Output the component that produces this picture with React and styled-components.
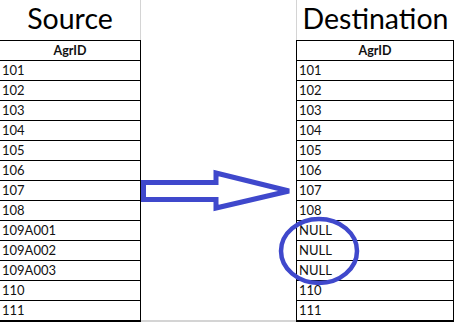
import React from 'react'
import styled, { createGlobalStyle } from 'styled-components'

const GlobalStyle = createGlobalStyle`
  html, body {
    margin: 0;
    padding: 0;
    background: #fff;
  }
  body {
    font-family: Lato, "Liberation Sans", sans-serif;
    color: #000;
  }
`

const Page = styled.div`
  position: relative;
  width: 454px;
  height: 322px;
  overflow: hidden;
  display: flex;
  align-items: flex-start;
  background: #fff;
`

const Panel = styled.div`
  width: ${p => p.$width}px;
  flex-shrink: 0;
  display: flex;
  flex-direction: column;
`

const Title = styled.div`
  height: 40px;
  line-height: 36px;
  font-size: 28.5px;
  text-align: center;
  white-space: nowrap;
  overflow: visible;
  box-sizing: border-box;
  border-${p => p.$side}: 1px solid #d4d4d4;
`

const Table = styled.div`
  display: flex;
  flex-direction: column;
  border-top: 1px solid #000;
  border-bottom: 2px solid #000;
  border-right: 1px solid #000;
  border-left: ${p => (p.$left ? '1px solid #000' : 'none')};
`

const Row = styled.div`
  height: 19px;
  line-height: 19px;
  font-size: 13px;
  padding-left: 2px;
  white-space: nowrap;
  color: #111;
  border-top: ${p => (p.$first ? 'none' : '1px solid #000')};
  ${p => p.$head && `
    font-weight: 700;
    font-size: 12.5px;
    text-align: center;
    padding-left: 0;
  `}
`

const Gap = styled.div`
  flex: 1;
  height: 322px;
  box-sizing: border-box;
  border-bottom: 2px solid #d4d4d4;
`

const Overlay = styled.svg`
  position: absolute;
  left: 0;
  top: 0;
  pointer-events: none;
`

const source = ['101', '102', '103', '104', '105', '106', '107', '108', '109A001', '109A002', '109A003', '110', '111']
const destination = ['101', '102', '103', '104', '105', '106', '107', '108', 'NULL', 'NULL', 'NULL', '110', '111']

const DataTable = ({ rows, left }) => (
  <Table $left={left}>
    <Row $head $first>AgrID</Row>
    {rows.map((r, i) => (
      <Row key={i}>{r}</Row>
    ))}
  </Table>
)

const App = () => {
  return (
    <Page>
      <GlobalStyle />
      <Panel $width={141}>
        <Title $side="right">Source</Title>
        <DataTable rows={source} />
      </Panel>
      <Gap />
      <Panel $width={158}>
        <Title $side="left">Destination</Title>
        <DataTable rows={destination} left />
      </Panel>
      <Overlay width="454" height="322" viewBox="0 0 454 322">
        <polygon
          points="143.5,182.5 216,182.5 216,173 289,191 216,208 216,199.5 143.5,199.5"
          fill="none"
          stroke="#3f48cc"
          strokeWidth="5"
          strokeLinejoin="miter"
        />
        <ellipse cx="319" cy="251" rx="38" ry="32" fill="none" stroke="#3f48cc" strokeWidth="4.5" />
      </Overlay>
    </Page>
  )
}

export default App
